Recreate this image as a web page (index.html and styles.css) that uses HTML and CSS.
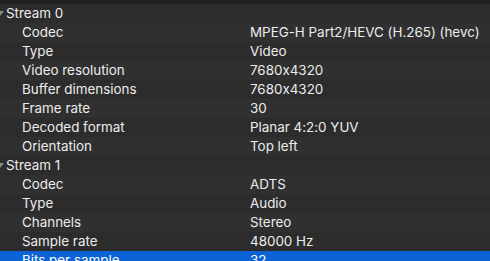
FILE: index.html
```html
<!DOCTYPE html>
<html>
<head>
<meta charset="utf-8">
<link rel="stylesheet" href="styles.css">
</head>
<body>
<div class="table">
  <div class="row header"><span class="label"><span class="tri"></span>Stream 0</span><span class="value"></span></div>
  <div class="row"><span class="label">Codec</span><span class="value">MPEG-H Part2/HEVC (H.265) (hevc)</span></div>
  <div class="row"><span class="label">Type</span><span class="value">Video</span></div>
  <div class="row"><span class="label">Video resolution</span><span class="value">7680x4320</span></div>
  <div class="row"><span class="label">Buffer dimensions</span><span class="value">7680x4320</span></div>
  <div class="row"><span class="label">Frame rate</span><span class="value">30</span></div>
  <div class="row"><span class="label">Decoded format</span><span class="value">Planar 4:2:0 YUV</span></div>
  <div class="row"><span class="label">Orientation</span><span class="value">Top left</span></div>
  <div class="row header"><span class="label"><span class="tri"></span>Stream 1</span><span class="value"></span></div>
  <div class="row"><span class="label">Codec</span><span class="value">ADTS</span></div>
  <div class="row"><span class="label">Type</span><span class="value">Audio</span></div>
  <div class="row"><span class="label">Channels</span><span class="value">Stereo</span></div>
  <div class="row"><span class="label">Sample rate</span><span class="value">48000 Hz</span></div>
  <div class="row selected"><span class="label">Bits per sample</span><span class="value">32</span></div>
</div>
</body>
</html>
```
FILE: styles.css
```css
html, body {
  margin: 0;
  padding: 0;
  background: #1f1f1f;
  overflow: hidden;
}
body {
  width: 490px;
  height: 261px;
  font-family: Inter, "Liberation Sans", sans-serif;
  font-size: 13.4px;
  font-feature-settings: "calt" 0;
  color: #ececec;
}
.table {
  padding-top: 4px;
  display: flex;
  flex-direction: column;
}
.row {
  height: 19px;
  display: grid;
  grid-template-columns: 250px 1fr;
  align-items: center;
  line-height: 19px;
  white-space: nowrap;
  background: #2c2c2c;
}
.row:nth-child(even) {
  background: #303030;
}
.row.selected {
  background: #0b63d6;
  color: #ffffff;
}
.label {
  padding-left: 22px;
}
.header .label {
  padding-left: 6px;
  position: relative;
}
.tri {
  position: absolute;
  left: -4px;
  top: 7px;
  width: 0;
  height: 0;
  border-left: 4px solid transparent;
  border-right: 4px solid transparent;
  border-top: 5px solid #8c8c8c;
}
```
